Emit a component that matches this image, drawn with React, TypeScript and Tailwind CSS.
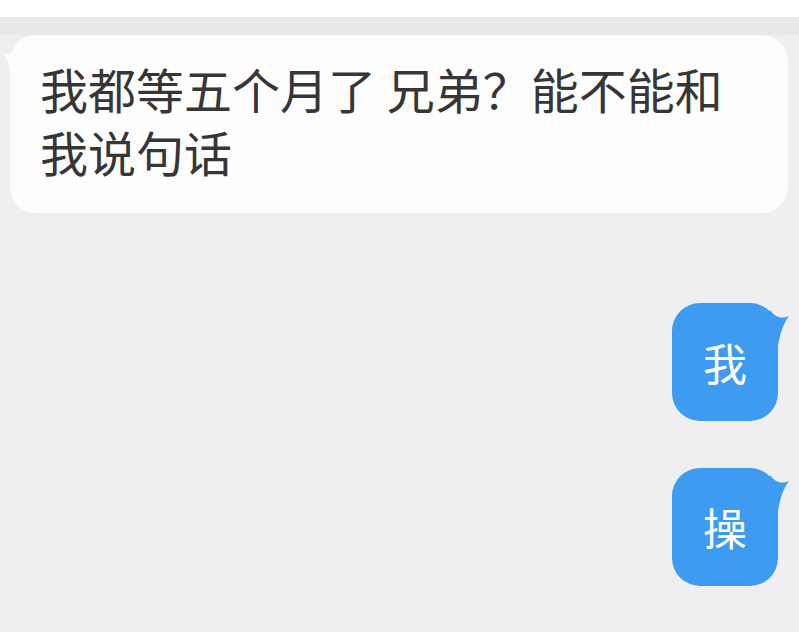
import React from 'react';

const cjk = { fontFamily: '"Noto Sans CJK SC", "Noto Sans", sans-serif' };

function OutgoingBubble({ text }: { text: string }) {
  return (
    <div className="relative mr-[21px] flex h-[118px] w-[106px] items-center justify-center self-end rounded-[28px] bg-[#3d9cf2]">
      <span className="text-[44px] leading-none text-white">{text}</span>
      {/* tail */}
      <svg
        className="absolute left-[98px] top-[5px]"
        width="22"
        height="40"
        viewBox="0 0 22 40"
      >
        <path d="M0 2 C6 10 11 11 19 8 C13 16 10 26 8 38 L0 38 Z" fill="#3d9cf2" />
      </svg>
    </div>
  );
}

export default function App() {
  return (
    <div className="flex h-[632px] w-[799px] flex-col overflow-hidden bg-[#efeef1]" style={cjk}>
      <div className="h-[17px] bg-white" />
      <div className="h-[18px] bg-[#e9e8eb]" />

      {/* incoming message */}
      <div className="relative ml-[10px] mr-[11px] h-[178px] rounded-[26px] bg-[#fefdfe] pl-[30px] pt-[22px]">
        <svg className="absolute left-[-9px] top-[8px]" width="22" height="40" viewBox="0 0 22 40">
          <path d="M22 2 C16 10 9 12 2 10 C7 17 10 26 11 38 L22 38 Z" fill="#fefdfe" />
        </svg>
        <p className="text-[48px] leading-[63px] text-[#363636]">
          我都等五个月了 兄弟？能不能和
          <br />
          我说句话
        </p>
      </div>

      <div className="mt-[90px] flex flex-col gap-[47px]">
        <OutgoingBubble text="我" />
        <OutgoingBubble text="操" />
      </div>
    </div>
  );
}
